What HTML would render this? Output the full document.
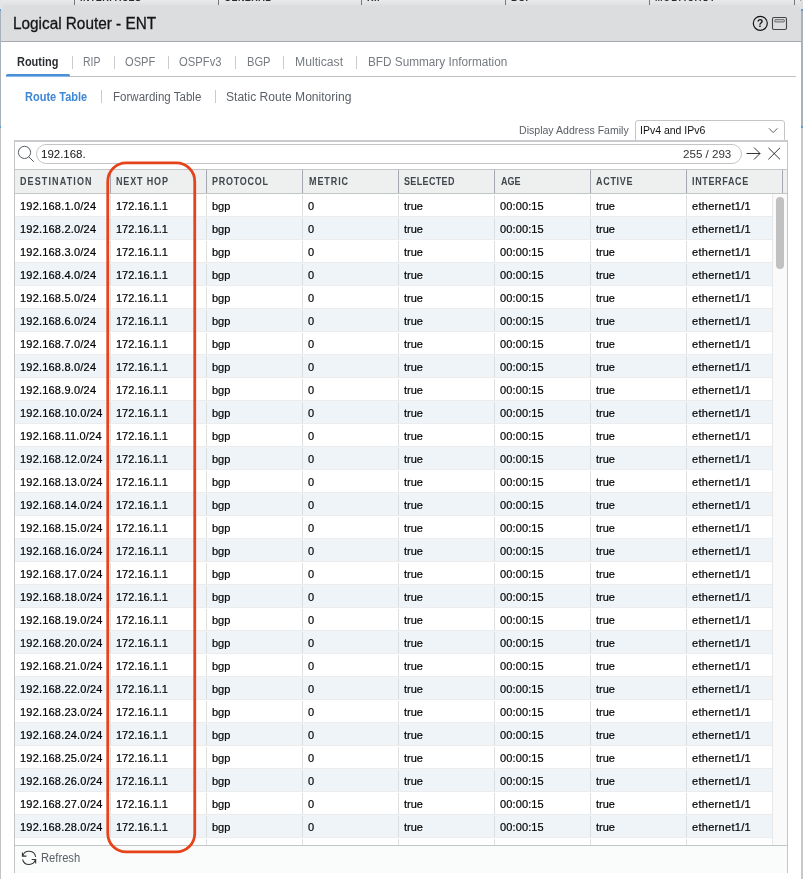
<!DOCTYPE html>
<html><head><meta charset="utf-8"><title>Logical Router - ENT</title>
<style>
html,body{margin:0;padding:0;}
body{width:803px;height:879px;position:relative;overflow:hidden;background:#fff;font-family:"Liberation Sans",sans-serif;font-size:12px;color:#000;}
.abs{position:absolute;}
.lb{position:absolute;white-space:nowrap;line-height:normal;transform-origin:0 0;display:block;}
#under{left:0;top:0;width:803px;height:12px;background:linear-gradient(#e9eaea,#dcdddf 7px);}
#under span{position:absolute;top:-8px;font-size:10px;font-weight:bold;color:#2a2a2a;letter-spacing:.5px;line-height:normal;transform:scaleX(.9);transform-origin:0 0;}
#under i{position:absolute;top:0;width:1px;height:5px;background:#777;}
#leftedge{left:0;top:0;width:1px;height:879px;background:linear-gradient(#e4e5e6 0,#e4e5e6 9px,#5b9bd5 9px,#5b9bd5 11px,#a9b1ba 11px,#a9b1ba 126px,#5b9bd5 126px,#5b9bd5 128px,#c2c2c2 128px);}
#rightedge{left:801px;top:0;width:2px;height:879px;background:linear-gradient(#dcdddf 0,#dcdddf 9px,#5b9bd5 9px,#5b9bd5 11px,#a9b1ba 11px,#a9b1ba 126px,#5b9bd5 126px,#5b9bd5 128px,#c8c8c8 128px);}
#dlg{left:1px;top:5px;width:800px;height:874px;background:#fff;border-radius:5px 5px 0 0;overflow:hidden;}
#titlebar{left:0;top:0;width:800px;height:36px;background:#dcdddf;border-bottom:1px solid #a6aaaf;}
.vs{position:absolute;width:1px;background:#c9cbcd;}
#tabline{left:6px;top:76px;width:790px;height:1px;background:#bfc1c3;}
#tabul{left:6px;top:74px;width:64px;height:3px;background:linear-gradient(#4a90d9 0,#4a90d9 2px,#8db7e4 2px);border-radius:1.5px 1.5px 0 0;}
#sel{left:635px;top:120px;width:150px;height:22px;border:1px solid #c3c6c9;border-radius:3px;background:#fff;box-sizing:border-box;}
#panel{left:14px;top:140px;width:774px;height:733px;border:1px solid #c3c6c9;border-top:2px solid #c9cbce;border-bottom:none;background:#fff;box-sizing:border-box;overflow:hidden;}
#search{left:0;top:0;width:772px;height:27px;background:#fff;border-bottom:1px solid #c3c6c9;}
#pill{left:21px;top:2px;width:706px;height:20px;border:1px solid #c3c6c9;border-radius:10px;box-sizing:border-box;}
#hdr{left:0;top:28px;width:772px;height:23px;background:#eef0f0;border-bottom:1px solid #c3c6c9;}
.hs{position:absolute;top:170px;width:1px;height:23px;background:#a4a8ae;}
table{position:absolute;left:0;top:52px;border-collapse:separate;border-spacing:0;table-layout:fixed;width:757px;}
td{height:23px;box-sizing:border-box;border-bottom:1px solid #ececec;padding:2px 0 0 5px;font-size:11px;line-height:20px;color:#000;white-space:nowrap;overflow:hidden;background:linear-gradient(#dedfe0,#dedfe0) no-repeat right 0 top 1px/1px 21px;}
tr.alt td{background:#eff4f8 linear-gradient(#dcdee0,#dcdee0) no-repeat right 0 top 1px/1px 21px;}
td{-webkit-text-stroke:.2px #000}
td:nth-child(1){letter-spacing:.2px}
td:last-child{background-image:none !important}
td:nth-child(6){letter-spacing:.13px}
td:nth-child(8){letter-spacing:.3px}
#sb{left:757px;top:52px;width:15px;height:651px;background:#fafafa;border-left:1px solid #e8e8e8;box-sizing:border-box;}
#sb i{position:absolute;left:3px;top:3px;width:8px;height:72px;border-radius:4px;background:#c1c1c1;}
#foot{left:0;top:703px;width:772px;height:28px;border-top:1px solid #c3c6c9;background:#fafbfb;box-sizing:border-box;}
#wrap{position:absolute;left:0;top:0;width:803px;height:879px;will-change:transform;}
</style></head><body><div id="wrap">
<div id="under" class="abs">
<span style="left:80px">INTERFACES</span><span style="left:224px">GENERAL</span><span style="left:367px">RIP</span><span style="left:511px">BGP</span><span style="left:655px;letter-spacing:1.2px">MULTICAST</span><span style="left:800px">BFD</span>
<i style="left:74px"></i><i style="left:218px"></i><i style="left:361px"></i><i style="left:505px"></i><i style="left:649px"></i><i style="left:794px"></i>
</div>
<div id="leftedge" class="abs"></div>
<div id="rightedge" class="abs"></div>
<div id="dlg" class="abs">
 <div id="titlebar" class="abs"></div>
</div>
<svg class="abs" style="left:751px;top:14px" width="40" height="20" viewBox="0 0 40 20">
  <circle cx="9.3" cy="9.3" r="7" fill="none" stroke="#111" stroke-width="1.2"/>
  <text x="10.3" y="13.3" text-anchor="middle" font-family="Liberation Sans, sans-serif" font-weight="bold" font-size="11.5" fill="#111" transform="scale(.9,1)">?</text>
  <rect x="21.5" y="3.5" width="14" height="12" rx="1.5" fill="none" stroke="#444" stroke-width="1.1"/>
  <rect x="23.9" y="5.7" width="9.4" height="2.2" rx=".4" fill="none" stroke="#444" stroke-width=".8"/>
</svg>
<span class="lb" style="left:13.35px;top:15px;font-size:16px;font-weight:normal;color:#151515;-webkit-text-stroke:.3px #151515;transform:scaleX(0.9576);">Logical Router - ENT</span>
<div id="tabline" class="abs"></div><div id="tabul" class="abs"></div>
<span class="lb" style="left:17.35px;top:55px;font-size:12px;font-weight:bold;color:#2a2d31;transform:scaleX(0.9141);">Routing</span><span class="lb" style="left:83.40px;top:55px;font-size:12px;font-weight:normal;color:#767b81;transform:scaleX(0.8743);">RIP</span><span class="lb" style="left:125.00px;top:55px;font-size:12px;font-weight:normal;color:#767b81;transform:scaleX(0.9252);">OSPF</span><span class="lb" style="left:179.20px;top:55px;font-size:12px;font-weight:normal;color:#767b81;transform:scaleX(0.9378);">OSPFv3</span><span class="lb" style="left:246.55px;top:55px;font-size:12px;font-weight:normal;color:#767b81;transform:scaleX(0.9300);">BGP</span><span class="lb" style="left:294.60px;top:55px;font-size:12px;font-weight:normal;color:#767b81;transform:scaleX(1.0150);">Multicast</span><span class="lb" style="left:368.00px;top:55px;font-size:12px;font-weight:normal;color:#767b81;transform:scaleX(0.9803);">BFD Summary Information</span>
<i class="vs" style="left:72px;top:56px;height:13px"></i><i class="vs" style="left:114px;top:56px;height:13px"></i><i class="vs" style="left:168px;top:56px;height:13px"></i><i class="vs" style="left:235px;top:56px;height:13px"></i><i class="vs" style="left:283px;top:56px;height:13px"></i><i class="vs" style="left:356px;top:56px;height:13px"></i>
<span class="lb" style="left:25.35px;top:90px;font-size:12px;font-weight:bold;color:#3d87d4;transform:scaleX(0.9168);">Route Table</span><span class="lb" style="left:112.60px;top:90px;font-size:12px;font-weight:normal;color:#5b6067;transform:scaleX(0.9616);">Forwarding Table</span><span class="lb" style="left:226.20px;top:90px;font-size:12px;font-weight:normal;color:#5b6067;transform:scaleX(1.0056);">Static Route Monitoring</span>
<i class="vs" style="left:101px;top:90px;height:13px"></i><i class="vs" style="left:215px;top:90px;height:13px"></i>
<span class="lb" style="left:519.40px;top:124px;font-size:11px;font-weight:normal;color:#5b6067;transform:scaleX(0.9600);">Display Address Family</span>
<div id="sel" class="abs">
 <svg class="abs" style="left:130px;top:6px" width="12" height="8" viewBox="0 0 12 8"><path d="M3 1.3 L7.2 5.6 L11.4 1.3" fill="none" stroke="#5a5f66" stroke-width="1"/></svg>
</div>
<span class="lb" style="left:640.35px;top:124px;font-size:11px;font-weight:normal;color:#111;transform:scaleX(0.9538);">IPv4 and IPv6</span>
<div id="panel" class="abs">
 <div id="search" class="abs">
  <svg class="abs" style="left:2px;top:3px" width="18" height="20" viewBox="0 0 18 20"><circle cx="7.5" cy="7.4" r="6.1" fill="none" stroke="#555b63" stroke-width="1"/><path d="M11.8 11.8 L16.8 16.8" stroke="#555b63" stroke-width="1" fill="none"/></svg>
  <div id="pill" class="abs"></div>
  <svg class="abs" style="left:730px;top:3px" width="40" height="18" viewBox="0 0 40 18"><path d="M1.5 8.5 H15 M9 2.5 L15 8.5 L9 14.5" fill="none" stroke="#333" stroke-width="1"/><path d="M23.4 2.8 L35 14.4 M35 2.8 L23.4 14.4" fill="none" stroke="#333" stroke-width="1"/></svg>
 </div>
 <div id="hdr" class="abs"></div>
 <table>
  <colgroup><col style="width:96px"><col style="width:96px"><col style="width:96px"><col style="width:96px"><col style="width:96px"><col style="width:96px"><col style="width:96px"><col style="width:85px"></colgroup>
  <tbody>
<tr><td>192.168.1.0/24</td><td>172.16.1.1</td><td>bgp</td><td>0</td><td>true</td><td>00:00:15</td><td>true</td><td>ethernet1/1</td></tr>
<tr class="alt"><td>192.168.2.0/24</td><td>172.16.1.1</td><td>bgp</td><td>0</td><td>true</td><td>00:00:15</td><td>true</td><td>ethernet1/1</td></tr>
<tr><td>192.168.3.0/24</td><td>172.16.1.1</td><td>bgp</td><td>0</td><td>true</td><td>00:00:15</td><td>true</td><td>ethernet1/1</td></tr>
<tr class="alt"><td>192.168.4.0/24</td><td>172.16.1.1</td><td>bgp</td><td>0</td><td>true</td><td>00:00:15</td><td>true</td><td>ethernet1/1</td></tr>
<tr><td>192.168.5.0/24</td><td>172.16.1.1</td><td>bgp</td><td>0</td><td>true</td><td>00:00:15</td><td>true</td><td>ethernet1/1</td></tr>
<tr class="alt"><td>192.168.6.0/24</td><td>172.16.1.1</td><td>bgp</td><td>0</td><td>true</td><td>00:00:15</td><td>true</td><td>ethernet1/1</td></tr>
<tr><td>192.168.7.0/24</td><td>172.16.1.1</td><td>bgp</td><td>0</td><td>true</td><td>00:00:15</td><td>true</td><td>ethernet1/1</td></tr>
<tr class="alt"><td>192.168.8.0/24</td><td>172.16.1.1</td><td>bgp</td><td>0</td><td>true</td><td>00:00:15</td><td>true</td><td>ethernet1/1</td></tr>
<tr><td>192.168.9.0/24</td><td>172.16.1.1</td><td>bgp</td><td>0</td><td>true</td><td>00:00:15</td><td>true</td><td>ethernet1/1</td></tr>
<tr class="alt"><td>192.168.10.0/24</td><td>172.16.1.1</td><td>bgp</td><td>0</td><td>true</td><td>00:00:15</td><td>true</td><td>ethernet1/1</td></tr>
<tr><td>192.168.11.0/24</td><td>172.16.1.1</td><td>bgp</td><td>0</td><td>true</td><td>00:00:15</td><td>true</td><td>ethernet1/1</td></tr>
<tr class="alt"><td>192.168.12.0/24</td><td>172.16.1.1</td><td>bgp</td><td>0</td><td>true</td><td>00:00:15</td><td>true</td><td>ethernet1/1</td></tr>
<tr><td>192.168.13.0/24</td><td>172.16.1.1</td><td>bgp</td><td>0</td><td>true</td><td>00:00:15</td><td>true</td><td>ethernet1/1</td></tr>
<tr class="alt"><td>192.168.14.0/24</td><td>172.16.1.1</td><td>bgp</td><td>0</td><td>true</td><td>00:00:15</td><td>true</td><td>ethernet1/1</td></tr>
<tr><td>192.168.15.0/24</td><td>172.16.1.1</td><td>bgp</td><td>0</td><td>true</td><td>00:00:15</td><td>true</td><td>ethernet1/1</td></tr>
<tr class="alt"><td>192.168.16.0/24</td><td>172.16.1.1</td><td>bgp</td><td>0</td><td>true</td><td>00:00:15</td><td>true</td><td>ethernet1/1</td></tr>
<tr><td>192.168.17.0/24</td><td>172.16.1.1</td><td>bgp</td><td>0</td><td>true</td><td>00:00:15</td><td>true</td><td>ethernet1/1</td></tr>
<tr class="alt"><td>192.168.18.0/24</td><td>172.16.1.1</td><td>bgp</td><td>0</td><td>true</td><td>00:00:15</td><td>true</td><td>ethernet1/1</td></tr>
<tr><td>192.168.19.0/24</td><td>172.16.1.1</td><td>bgp</td><td>0</td><td>true</td><td>00:00:15</td><td>true</td><td>ethernet1/1</td></tr>
<tr class="alt"><td>192.168.20.0/24</td><td>172.16.1.1</td><td>bgp</td><td>0</td><td>true</td><td>00:00:15</td><td>true</td><td>ethernet1/1</td></tr>
<tr><td>192.168.21.0/24</td><td>172.16.1.1</td><td>bgp</td><td>0</td><td>true</td><td>00:00:15</td><td>true</td><td>ethernet1/1</td></tr>
<tr class="alt"><td>192.168.22.0/24</td><td>172.16.1.1</td><td>bgp</td><td>0</td><td>true</td><td>00:00:15</td><td>true</td><td>ethernet1/1</td></tr>
<tr><td>192.168.23.0/24</td><td>172.16.1.1</td><td>bgp</td><td>0</td><td>true</td><td>00:00:15</td><td>true</td><td>ethernet1/1</td></tr>
<tr class="alt"><td>192.168.24.0/24</td><td>172.16.1.1</td><td>bgp</td><td>0</td><td>true</td><td>00:00:15</td><td>true</td><td>ethernet1/1</td></tr>
<tr><td>192.168.25.0/24</td><td>172.16.1.1</td><td>bgp</td><td>0</td><td>true</td><td>00:00:15</td><td>true</td><td>ethernet1/1</td></tr>
<tr class="alt"><td>192.168.26.0/24</td><td>172.16.1.1</td><td>bgp</td><td>0</td><td>true</td><td>00:00:15</td><td>true</td><td>ethernet1/1</td></tr>
<tr><td>192.168.27.0/24</td><td>172.16.1.1</td><td>bgp</td><td>0</td><td>true</td><td>00:00:15</td><td>true</td><td>ethernet1/1</td></tr>
<tr class="alt"><td>192.168.28.0/24</td><td>172.16.1.1</td><td>bgp</td><td>0</td><td>true</td><td>00:00:15</td><td>true</td><td>ethernet1/1</td></tr>
<tr><td>192.168.29.0/24</td><td>172.16.1.1</td><td>bgp</td><td>0</td><td>true</td><td>00:00:15</td><td>true</td><td>ethernet1/1</td></tr>
  </tbody>
 </table>
 <div id="sb" class="abs"><i></i></div>
 <div id="foot" class="abs">
 </div>
</div>
<i class="hs" style="left:110px"></i><i class="hs" style="left:206px"></i><i class="hs" style="left:302px"></i><i class="hs" style="left:398px"></i><i class="hs" style="left:494px"></i><i class="hs" style="left:590px"></i><i class="hs" style="left:686px"></i><i class="hs" style="left:782px"></i>
<span class="lb" style="left:40.85px;top:148px;font-size:11px;font-weight:normal;color:#111;transform:scaleX(1.0425);">192.168.</span><span class="lb" style="left:683.00px;top:148px;font-size:11px;font-weight:normal;color:#333;transform:scaleX(1.0530);">255 / 293</span>
<span class="lb" style="left:20.20px;top:176px;font-size:10px;font-weight:bold;color:#41464c;letter-spacing:1.244px;transform:scaleX(.9)">DESTINATION</span><span class="lb" style="left:116.15px;top:176px;font-size:10px;font-weight:bold;color:#41464c;letter-spacing:0.944px;transform:scaleX(.9)">NEXT HOP</span><span class="lb" style="left:212.15px;top:176px;font-size:10px;font-weight:bold;color:#41464c;letter-spacing:0.833px;transform:scaleX(.9)">PROTOCOL</span><span class="lb" style="left:308.65px;top:176px;font-size:10px;font-weight:bold;color:#41464c;letter-spacing:1.011px;transform:scaleX(.9)">METRIC</span><span class="lb" style="left:404.20px;top:176px;font-size:10px;font-weight:bold;color:#41464c;letter-spacing:0.389px;transform:scaleX(.9)">SELECTED</span><span class="lb" style="left:500.65px;top:176px;font-size:10px;font-weight:bold;color:#41464c;letter-spacing:-0.000px;transform:scaleX(.9)">AGE</span><span class="lb" style="left:596.20px;top:176px;font-size:10px;font-weight:bold;color:#41464c;letter-spacing:0.778px;transform:scaleX(.9)">ACTIVE</span><span class="lb" style="left:692.15px;top:176px;font-size:10px;font-weight:bold;color:#41464c;letter-spacing:0.729px;transform:scaleX(.9)">INTERFACE</span>
<svg class="abs" style="left:20px;top:848px" width="20" height="20" viewBox="0 0 20 20"><path d="M2.7 8.1 A6.6 6.6 0 0 1 15.6 9 M15.45 11.4 A6.6 6.6 0 0 1 2.6 11.3 M2.4 4.4 V8.1 H6.5 M15.7 15.4 V11.4 H11.7" fill="none" stroke="#333" stroke-width="1.05"/></svg>
<span class="lb" style="left:41.45px;top:851px;font-size:12px;font-weight:normal;color:#5b6067;transform:scaleX(0.9329);">Refresh</span>
<svg class="abs" style="left:100px;top:155px" width="110" height="710" viewBox="0 0 110 710"><rect x="7.75" y="7.9" width="87" height="689" rx="18.5" ry="18.5" fill="none" stroke="#e6431a" stroke-width="2.8"/></svg>
</div></body></html>
